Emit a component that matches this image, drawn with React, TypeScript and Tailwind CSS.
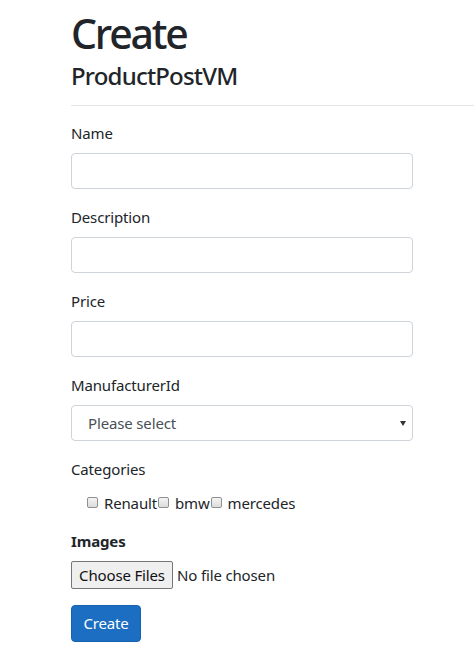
import React from 'react';

const fieldClass =
  'block w-[342px] h-[36px] rounded-[4px] border border-[#ced4da] bg-white px-3 text-[15px] text-[#495057] outline-none';

const TextField: React.FC<{ label: string }> = ({ label }) => (
  <div className="mb-4">
    <label className="mb-2 block h-6 leading-6">{label}</label>
    <input type="text" className={fieldClass} />
  </div>
);

const categories = ['Renault', 'bmw', 'mercedes'];

export default function App() {
  return (
    <div className="min-h-[659px] bg-white pl-[71px] pt-[9px] font-['Noto_Sans','Open_Sans',sans-serif] text-[15px] tracking-[-0.15px] text-[#212529]">
      <h1 className="text-[41px] font-medium leading-[48px] tracking-[-2.2px]">Create</h1>
      <h4 className="mt-[4px] text-[24px] font-medium leading-[29px] tracking-[-0.8px]">ProductPostVM</h4>
      <hr className="mb-[15px] mt-[15px] border-t border-[#e5e5e5]" />

      <form onSubmit={e => e.preventDefault()}>
        <TextField label="Name" />
        <TextField label="Description" />
        <TextField label="Price" />

        <div className="mb-4">
          <label className="mb-2 block h-6 leading-6">ManufacturerId</label>
          <div className="relative w-[342px]">
            <select className={`${fieldClass} appearance-none pl-4`} defaultValue="">
              <option value="">Please select</option>
            </select>
            <svg className="pointer-events-none absolute right-[7px] top-[16px]" width="6" height="5" viewBox="0 0 6 5">
              <path d="M0 0 H6 L3 5 Z" fill="#333" />
            </svg>
          </div>
        </div>

        <div className="mb-4">
          <label className="mb-2 block h-6 leading-6">Categories</label>
          <div className="flex h-6 items-center pl-[15px] pt-[4px]">
            {categories.map(c => (
              <label key={c} className="flex items-center">
                <input
                  type="checkbox"
                  className="mb-[2px] ml-[1px] mr-[6px] h-[11px] w-[11px] appearance-none rounded-[2px] border border-[#8f8f8f] bg-gradient-to-b from-[#f4f4f4] to-[#dcdcdc]"
                />
                <span>{c}</span>
              </label>
            ))}
          </div>
        </div>

        <div className="mb-4">
          <label className="mb-2 block h-6 font-bold leading-6">Images</label>
          <div className="flex h-[28px] items-center">
            <button
              type="button"
              className="h-[28px] w-[102px] rounded-[2px] border border-[#767676] bg-[#efefef] text-[15px] text-[#111]"
            >
              Choose Files
            </button>
            <span className="ml-[4px]">No file chosen</span>
          </div>
        </div>

        <button
          type="submit"
          className="h-[37px] w-[70px] rounded-[4px] border border-[#1861ac] bg-[#1b6ec2] text-[15px] text-white"
        >
          Create
        </button>
      </form>
    </div>
  );
}
